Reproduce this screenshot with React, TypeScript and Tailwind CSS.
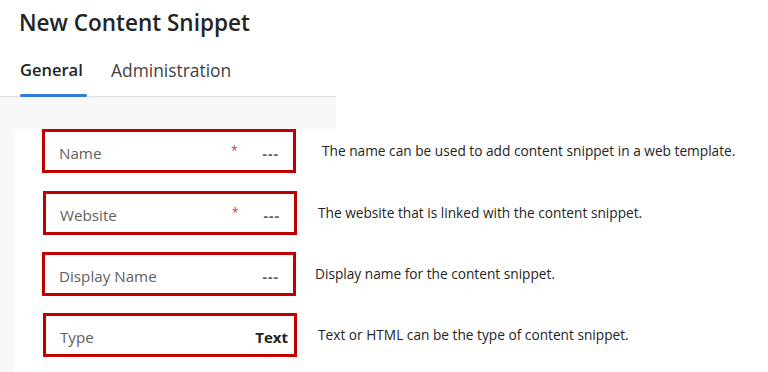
import React from "react";

const font = { fontFamily: '"Open Sans", "Noto Sans", sans-serif' };

type Row = {
  label: string;
  required?: boolean;
  value: string;
  bold?: boolean;
  note: string;
  boxMl: string;
  boxMt: string;
  noteMl: string;
};

function FieldRow({ label, required, value, bold, note, boxMl, boxMt, noteMl }: Row) {
  return (
    <div className={`flex items-center ${boxMt}`}>
      <div
        className={`${boxMl} flex h-[44px] w-[254px] shrink-0 items-center border-[3px] border-[#c00000] pl-[14px] pr-[6px] pt-[5px]`}
      >
        <span className="text-[15.2px] text-[#616161]">{label}</span>
        <span className="ml-auto flex items-center">
          {required && <span className="mr-[25px] -mt-[6px] text-[12px] text-[#d13438]">*</span>}
          {bold ? (
            <span className="text-[15px] font-bold text-[#242424]">{value}</span>
          ) : (
            <span className="mr-[8px] text-[14px] font-bold tracking-[1px] text-[#616161]">{value}</span>
          )}
        </span>
      </div>
      <span className={`${noteMl} whitespace-nowrap text-[13.7px] text-[#242424]`}>{note}</span>
    </div>
  );
}

export default function App() {
  const rows: Row[] = [
    {
      label: "Name",
      required: true,
      value: "---",
      note: "The name can be used to add content snippet in a web template.",
      boxMl: "ml-[28px]",
      boxMt: "mt-[15px]",
      noteMl: "ml-[26px]",
    },
    {
      label: "Website",
      required: true,
      value: "---",
      note: "The website that is linked with the content snippet.",
      boxMl: "ml-[29px]",
      boxMt: "mt-[18px]",
      noteMl: "ml-[21px]",
    },
    {
      label: "Display Name",
      value: "---",
      note: "Display name for the content snippet.",
      boxMl: "ml-[28px]",
      boxMt: "mt-[17px]",
      noteMl: "ml-[19px]",
    },
    {
      label: "Type",
      value: "Text",
      bold: true,
      note: "Text or HTML can be the type of content snippet.",
      boxMl: "ml-[29px]",
      boxMt: "mt-[17px]",
      noteMl: "ml-[21px]",
    },
  ];

  return (
    <div className="h-[372px] w-[768px] overflow-hidden bg-white" style={font}>
      <div className="h-[97px] w-[336px] border-b border-[#e0e0e0]">
        <h1 className="pl-[19px] pt-[7px] text-[22.5px] font-semibold leading-[32px] text-[#242424]">
          New Content Snippet
        </h1>
        <div className="mt-[19px] flex pl-[20px]">
          <div className="flex flex-col">
            <span className="text-[16.5px] font-semibold leading-[24px] text-[#242424]">General</span>
            <span className="mt-[12px] h-[3px] w-[67px] rounded-sm bg-[#2f7be0]"></span>
          </div>
          <span className="ml-[24px] text-[17.4px] leading-[24px] text-[#424242]">Administration</span>
        </div>
      </div>
      <div className="w-[336px] bg-[#f7f7f7] pl-[14px] pt-[17px]">
        <div className="h-[260px] w-[754px] rounded-tl-[6px] bg-white">
          {rows.map((r) => (
            <FieldRow key={r.label} {...r} />
          ))}
        </div>
      </div>
    </div>
  );
}
